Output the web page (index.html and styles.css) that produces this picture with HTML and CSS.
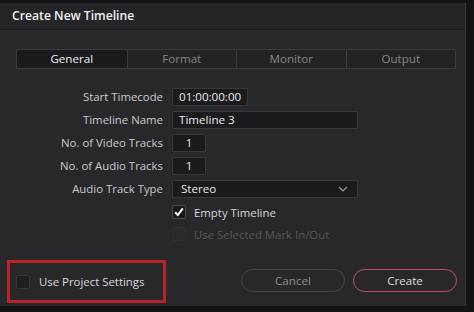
FILE: index.html
```html
<!DOCTYPE html>
<html>
<head>
<meta charset="utf-8">
<link rel="stylesheet" href="styles.css">
</head>
<body>
<div class="dialog">
  <div class="titlebar">Create New Timeline</div>
  <div class="content">
    <div class="tabs">
      <div class="tab active">General</div>
      <div class="tab">Format</div>
      <div class="tab">Monitor</div>
      <div class="tab">Output</div>
    </div>
    <div class="form">
      <div class="label">Start Timecode</div>
      <div class="field"><div class="input w-tc">01:00:00:00</div></div>
      <div class="label">Timeline Name</div>
      <div class="field"><div class="input w-long">Timeline 3</div></div>
      <div class="label">No. of Video Tracks</div>
      <div class="field"><div class="input w-num">1</div></div>
      <div class="label">No. of Audio Tracks</div>
      <div class="field"><div class="input w-num">1</div></div>
      <div class="label">Audio Track Type</div>
      <div class="field"><div class="input w-long select"><span>Stereo</span>
        <svg class="chev" width="10" height="6" viewBox="0 0 10 6"><path d="M1 1 L5 5 L9 1" fill="none" stroke="#9a9a9a" stroke-width="1.2"/></svg></div></div>
      <div></div>
      <div class="field check-row"><span class="box checked"><svg width="12" height="12" viewBox="0 0 12 12"><path d="M2.2 6.3 L4.8 9 L9.8 2.4" fill="none" stroke="#fff" stroke-width="2"/></svg></span><span class="check-label">Empty Timeline</span></div>
      <div></div>
      <div class="field check-row disabled last"><span class="box"></span><span class="check-label">Use Selected Mark In/Out</span></div>
    </div>
  </div>
  <div class="footer">
    <div class="highlight">
      <span class="box"></span><span class="check-label">Use Project Settings</span>
    </div>
    <div class="buttons">
      <div class="btn cancel">Cancel</div>
      <div class="btn create">Create</div>
    </div>
  </div>
</div>
</body>
</html>
```

FILE: styles.css
```css
html, body {
  margin: 0;
  padding: 0;
  background: #141416;
  width: 474px;
  height: 312px;
  overflow: hidden;
  font-family: "Open Sans", "Noto Sans", sans-serif;
}
.dialog {
  margin-top: 3px;
  width: 466px;
  height: 303px;
  background: #28282b;
  border-right: 1px solid #3a3a3d;
  box-sizing: border-box;
  display: flex;
  flex-direction: column;
}
.titlebar {
  height: 26px;
  line-height: 26px;
  padding-left: 12px;
  background: #252528;
  border-bottom: 1px solid #19191b;
  color: #f2f2f2;
  font-weight: 600;
  font-size: 12.2px;
}
.content {
  padding: 19px 9px 0 16px;
}
.tabs {
  display: grid;
  grid-template-columns: repeat(4, 1fr);
  height: 20px;
  width: 440px;
  border: 1px solid #3b3b3e;
  box-sizing: border-box;
  background: #232326;
}
.tab {
  font-size: 11.6px;
  line-height: 18px;
  text-align: center;
  color: #85858a;
  border-left: 1px solid #3b3b3e;
}
.tab:first-child { border-left: none; }
.tab.active {
  background: #1a1a1c;
  color: #eeeeee;
}
.form {
  margin-top: 19px;
  margin-left: -16px;
  display: grid;
  grid-template-columns: 163px auto;
  column-gap: 9px;
  row-gap: 5px;
  grid-auto-rows: 18px;
}
.label {
  text-align: right;
  font-size: 11.4px;
  line-height: 18px;
  color: #c9c9cc;
}
.field {
  display: flex;
  align-items: center;
}
.input {
  height: 18px;
  box-sizing: border-box;
  background: #1b1b1d;
  border: 1px solid #38383b;
  border-radius: 1px;
  color: #e8e8e8;
  font-size: 11.6px;
  line-height: 16px;
  padding-left: 6px;
}
.w-tc { width: 76px; }
.w-long { width: 186px; }
.w-num { width: 34px; text-align: center; padding-left: 0; }
.select {
  display: flex;
  justify-content: space-between;
  align-items: center;
  padding: 0 9px 0 8px;
}
.chev { display: block; }
.check-row { gap: 8px; }
.last { margin-top: -2px; }
.box {
  display: inline-flex;
  align-items: center;
  justify-content: center;
  width: 14px;
  height: 14px;
  box-sizing: border-box;
  background: #1e1e20;
  border: 1px solid #35353a;
  border-radius: 2px;
}
.box.checked { background: #1a1a1c; border-color: #4a4a4e; }
.check-label {
  font-size: 11.4px;
  color: #d6d6d8;
}
.disabled .check-label { color: #55555a; }
.disabled .box { background: #2a2a2d; border-color: #303033; }
.footer {
  margin-top: auto;
  display: flex;
  justify-content: space-between;
  align-items: flex-start;
  padding: 0 8px 0 7px;
  height: 46px;
}
.highlight {
  width: 159px;
  height: 43px;
  box-sizing: border-box;
  border: 3px solid #b8232a;
  display: flex;
  align-items: center;
  gap: 9px;
  padding-left: 6px;
}
.highlight .check-label { font-size: 11.4px; color: #d8d8da; }
.buttons {
  display: flex;
  gap: 8px;
  padding-top: 9px;
}
.btn {
  width: 104px;
  height: 23px;
  box-sizing: border-box;
  border-radius: 12px;
  text-align: center;
  font-size: 11.6px;
  line-height: 21px;
}
.cancel {
  border: 1px solid #444447;
  color: #8e8e92;
}
.create {
  border: 1.5px solid #c4504f;
  color: #dcdcde;
}
```
